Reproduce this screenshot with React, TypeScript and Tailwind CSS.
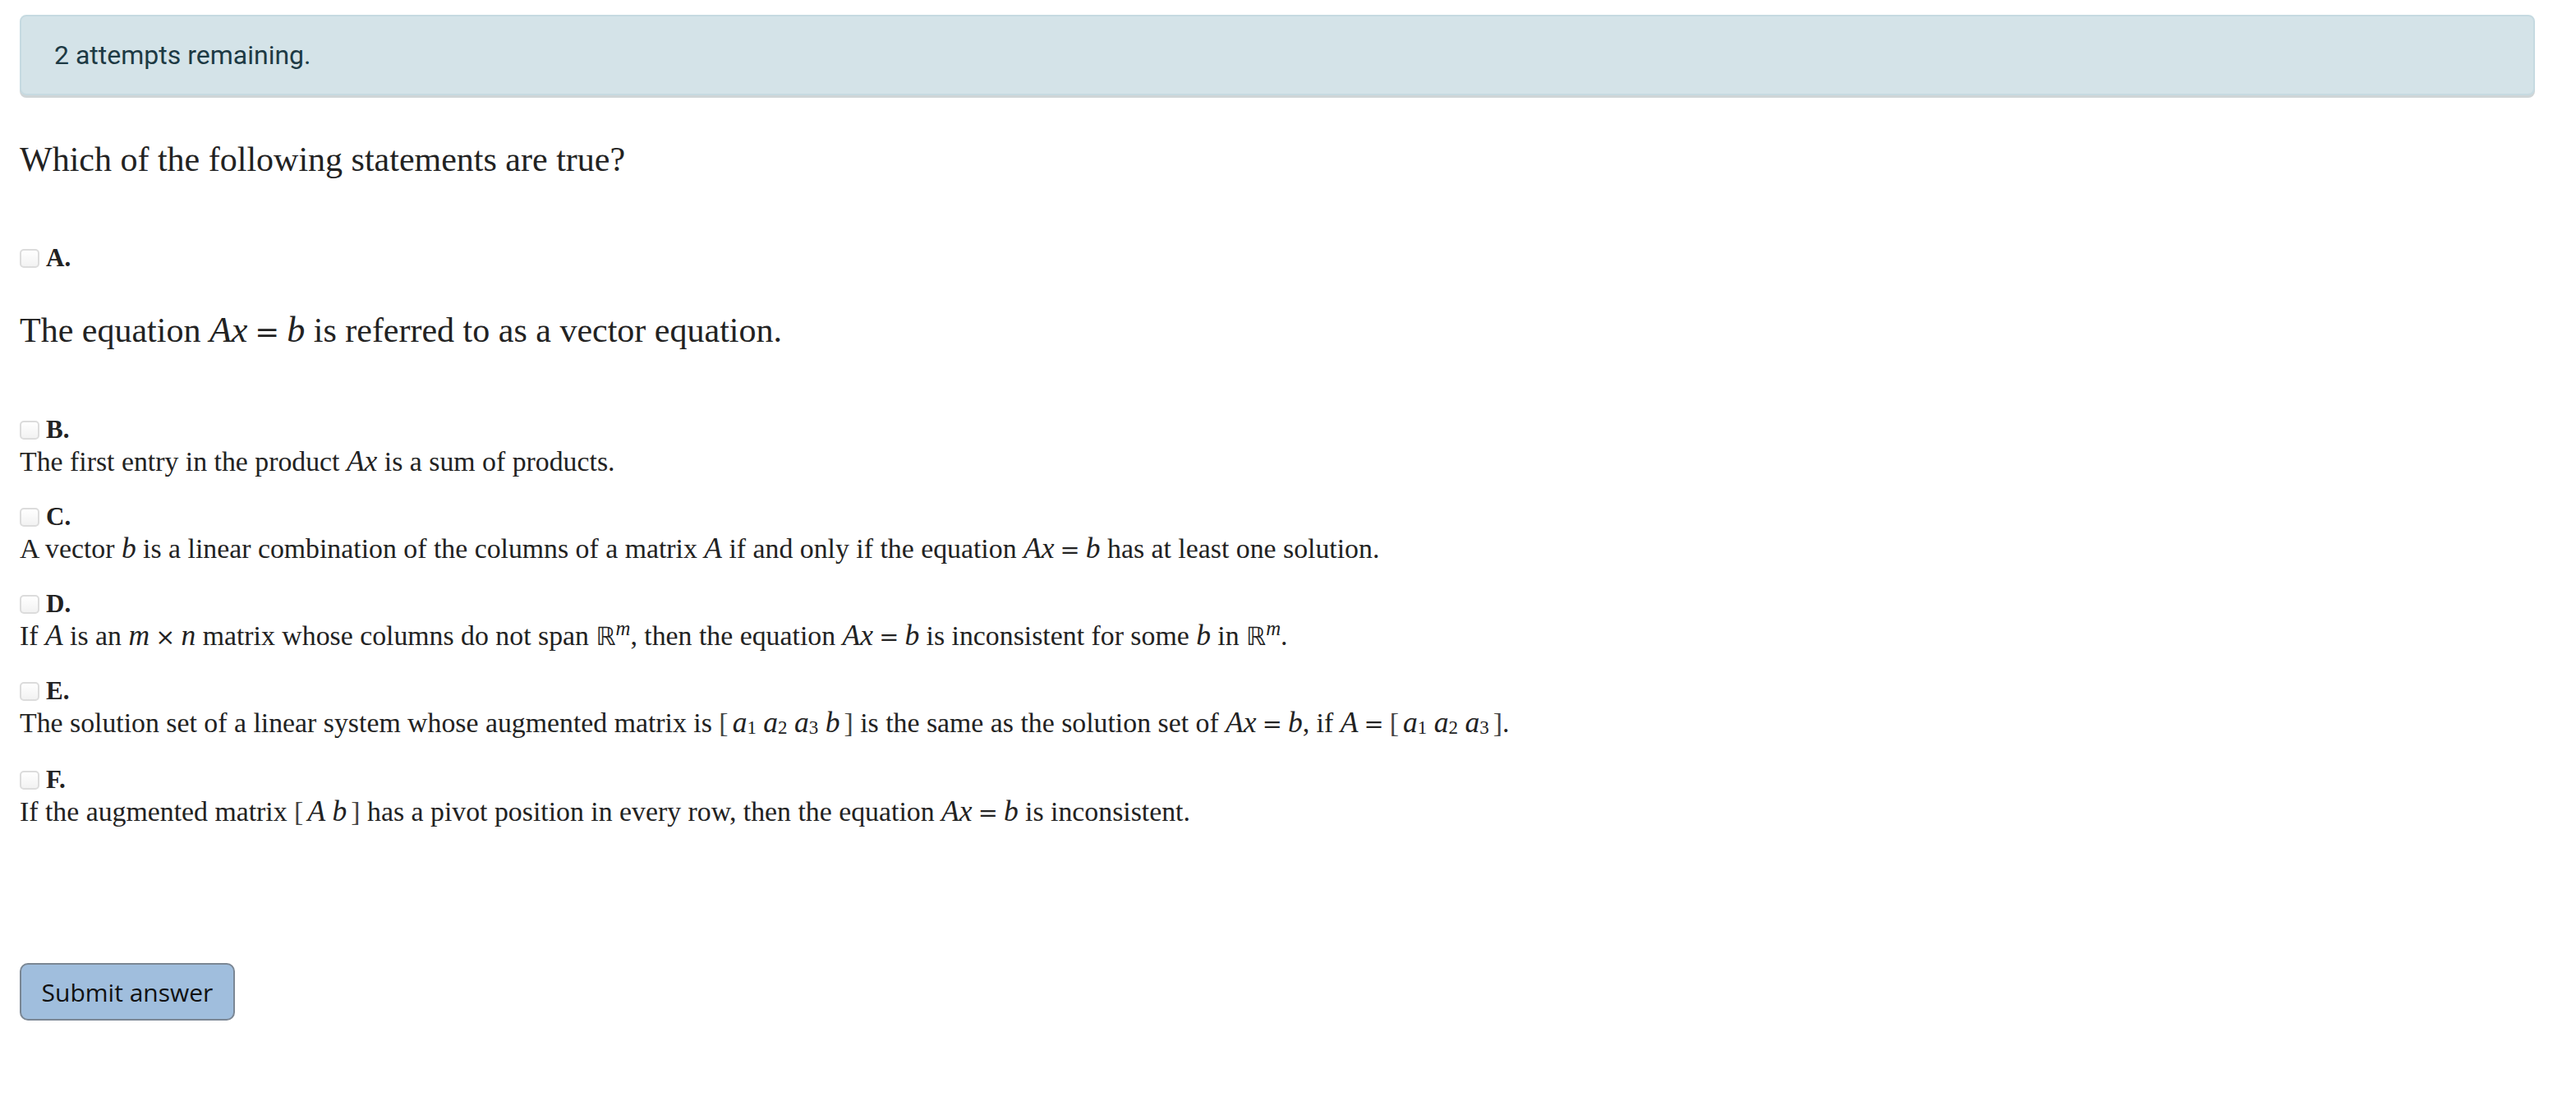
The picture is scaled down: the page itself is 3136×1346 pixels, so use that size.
import React from "react";

const M = ({ children }: { children: React.ReactNode }) => (
  <span className="font-['Liberation_Serif',serif] italic text-[1.05em]">{children}</span>
);

const Eq = () => <span className="mx-[0.25em] font-['DejaVu_Serif',serif] text-[0.85em]">=</span>;

const Sub = ({ n }: { n: string }) => <sub className="text-[0.68em] not-italic relative top-[0.1em]">{n}</sub>;

const RR = () => (
  <span>
    <span className="font-['DejaVu_Sans',sans-serif] text-[0.9em]">ℝ</span>
    <sup className="text-[0.7em]"><M>m</M></sup>
  </span>
);

const Bracket = ({ children }: { children: React.ReactNode }) => (
  <span>
    <span className="mr-[0.15em] text-[#444]">[</span>
    {children}
    <span className="ml-[0.15em] text-[#444]">]</span>
  </span>
);

function Option({ letter, children, top, big }: { letter: string; children: React.ReactNode; top: string; big?: boolean }) {
  return (
    <div className={top}>
      <label className="flex items-center h-[38px]">
        <span className="w-[24px] h-[23px] rounded-[5px] border-[2px] border-[#dcdcdc] bg-gradient-to-b from-white to-[#f2f2f2]" />
        <span className="ml-[8px] font-bold text-[31px] text-[#222]">{letter}</span>
      </label>
      {big ? (
        <p className="mt-[41px] text-[42px] leading-[56px] text-[#222]">{children}</p>
      ) : (
        <p className="text-[33.8px] leading-[38px] text-[#222]">{children}</p>
      )}
    </div>
  );
}

export default function App() {
  return (
    <div className="min-h-[1346px] bg-white pl-[24px] pr-[50px] pt-[18px] font-['Liberation_Serif',serif] w-[3136px]">
      <div className="h-[98px] rounded-[8px] border-[2px] border-[#c6dae1] bg-[#d4e3e8] shadow-[0_3px_0_#cfd5d7] flex items-center px-[40px]">
        <span className="font-['Roboto',sans-serif] text-[32px] text-[#1d3a44]">2 attempts remaining.</span>
      </div>

      <h2 className="mt-[50px] text-[42px] leading-[56px] text-[#222]">Which of the following statements are true?</h2>

      <Option letter="A." top="mt-[73px]" big>
        The equation <M>Ax</M><Eq /><M>b</M> is referred to as a vector equation.
      </Option>

      <Option letter="B." top="mt-[72px]">
        The first entry in the product <M>Ax</M> is a sum of products.
      </Option>

      <Option letter="C." top="mt-[29px]">
        A vector <M>b</M> is a linear combination of the columns of a matrix <M>A</M> if and only if the equation <M>Ax</M><Eq /><M>b</M> has at least one solution.
      </Option>

      <Option letter="D." top="mt-[28px]">
        If <M>A</M> is an <M>m</M><span className="mx-[0.25em] font-['DejaVu_Serif',serif] text-[0.85em]">×</span><M>n</M> matrix whose columns do not span <RR />, then the equation <M>Ax</M><Eq /><M>b</M> is inconsistent for some <M>b</M> in <RR />.
      </Option>

      <Option letter="E." top="mt-[28px]">
        The solution set of a linear system whose augmented matrix is{" "}
        <Bracket>
          <M>a</M><Sub n="1" /> <M>a</M><Sub n="2" /> <M>a</M><Sub n="3" /> <M>b</M>
        </Bracket>{" "}
        is the same as the solution set of <M>Ax</M><Eq /><M>b</M>, if <M>A</M><Eq />
        <Bracket>
          <M>a</M><Sub n="1" /> <M>a</M><Sub n="2" /> <M>a</M><Sub n="3" />
        </Bracket>
        .
      </Option>

      <Option letter="F." top="mt-[30px]">
        If the augmented matrix{" "}
        <Bracket>
          <M>A</M> <M>b</M>
        </Bracket>{" "}
        has a pivot position in every row, then the equation <M>Ax</M><Eq /><M>b</M> is inconsistent.
      </Option>

      <button className="mt-[164px] h-[70px] w-[262px] rounded-[10px] border-[2px] border-[#7b8794] bg-[#a0bedd] font-['Open_Sans',sans-serif] text-[30px] text-[#111]">
        Submit answer
      </button>
    </div>
  );
}
